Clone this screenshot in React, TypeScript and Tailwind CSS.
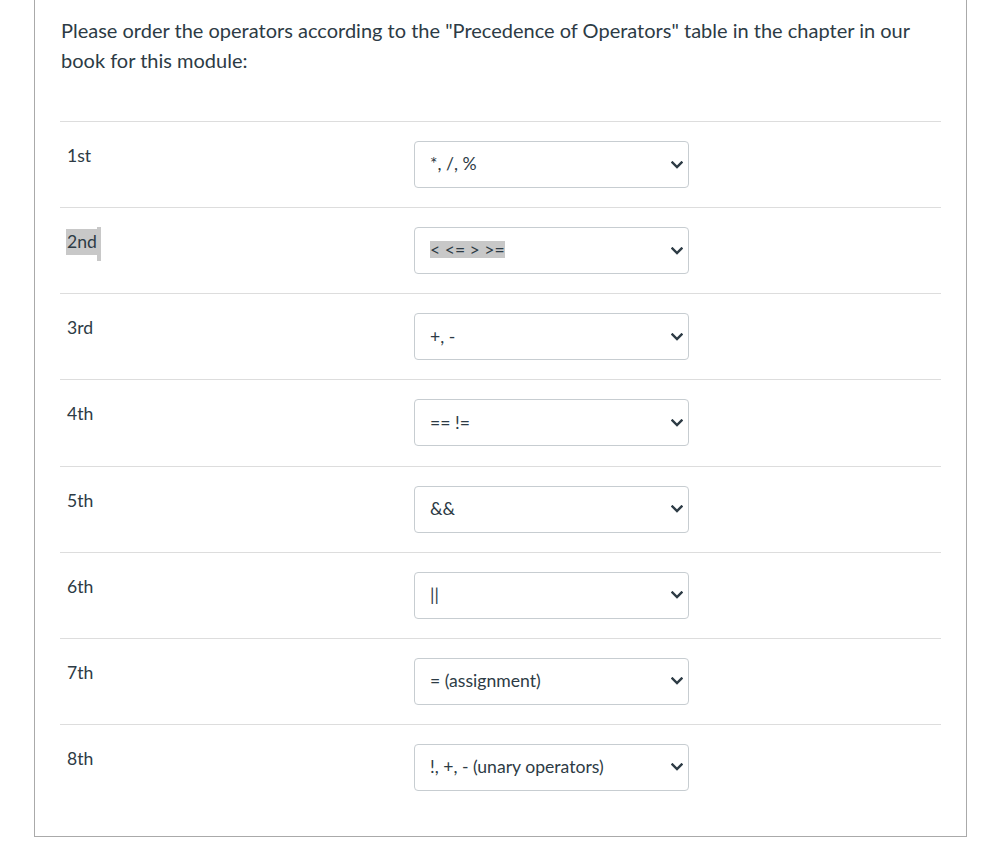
const rows: Array<{ label: string; value: string; labelMark?: boolean; valueMark?: boolean }> = [
  { label: "1st", value: "*, /, %" },
  { label: "2nd", value: "< <= > >=", labelMark: true, valueMark: true },
  { label: "3rd", value: "+, -" },
  { label: "4th", value: "== !=" },
  { label: "5th", value: "&&" },
  { label: "6th", value: "||" },
  { label: "7th", value: "= (assignment)" },
  { label: "8th", value: "!, +, - (unary operators)" },
];

function Chevron() {
  return (
    <svg width="12" height="8" viewBox="0 0 12 8" className="shrink-0">
      <polyline
        points="1.5,1.5 6,6 10.5,1.5"
        fill="none"
        stroke="#2d3b45"
        strokeWidth="2.4"
        strokeLinecap="square"
      />
    </svg>
  );
}

export default function App() {
  return (
    <div
      className="min-h-screen bg-white text-[#2d3b45]"
      style={{ fontFamily: "Lato, 'Noto Sans', sans-serif" }}
    >
      <div className="ml-[34px] w-[933px] border-x border-b border-[#aaaaaa] px-[25px] pt-[15px] pb-[26px]">
        <p className="text-[20px] leading-[30px] pl-px">
          Please order the operators according to the "Precedence of Operators" table in the chapter in our book
          for this module:
        </p>

        <div className="mt-[46px]">
          {rows.map((row) => (
            <div key={row.label} className="flex items-start border-t border-[#dddddd] pt-[19px] pb-[19.14px]">
              <div className="w-[354px] pl-[7px] pt-[2px] text-[17.6px] leading-[26px]">
                {row.labelMark ? (
                  <span className="relative -ml-px inline-block h-[26px] bg-[#c8c8c8] pl-px pr-[4px] align-top leading-[26px]">
                    {row.label}
                    <span className="absolute right-0 top-[-2px] h-[34px] w-[4px] bg-[#c8c8c8]" />
                  </span>
                ) : (
                  row.label
                )}
              </div>
              <div className="flex h-[47px] w-[275px] items-center justify-between rounded-[4px] border border-[#c7cdd1] bg-white pl-[15px] pr-[5px] text-[17.6px]">
                <span className="truncate">
                  {row.valueMark ? (
                    <span className="inline-block bg-[#c8c8c8] leading-[17px]">{row.value}</span>
                  ) : (
                    row.value
                  )}
                </span>
                <Chevron />
              </div>
            </div>
          ))}
        </div>
      </div>
    </div>
  );
}
